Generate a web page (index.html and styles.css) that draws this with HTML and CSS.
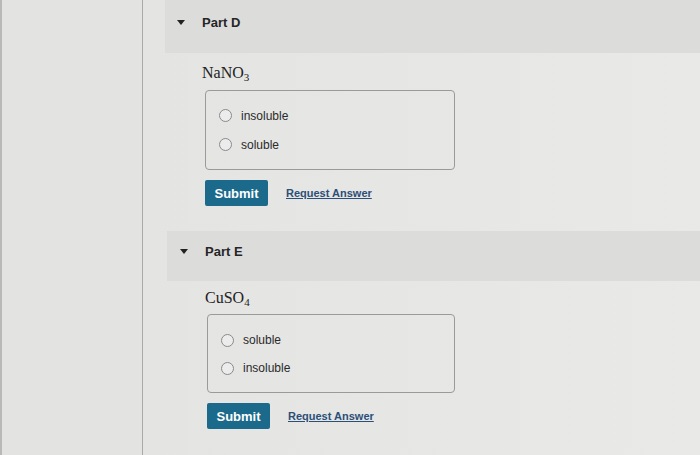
FILE: index.html
```html
<!DOCTYPE html>
<html>
<head>
<meta charset="utf-8">
<link rel="stylesheet" href="styles.css">
</head>
<body>
<div class="page">
  <aside class="sidebar"></aside>
  <main class="main">
    <section class="part part-d">
      <div class="part-head"><span class="caret"></span><span class="part-title">Part D</span></div>
      <div class="part-body">
        <div class="formula">NaNO<sub>3</sub></div>
        <div class="choices">
          <label class="choice"><span class="radio"></span><span>insoluble</span></label>
          <label class="choice"><span class="radio"></span><span>soluble</span></label>
        </div>
        <div class="actions">
          <button class="submit">Submit</button>
          <a class="request" href="#">Request Answer</a>
        </div>
      </div>
    </section>
    <section class="part part-e">
      <div class="part-head"><span class="caret"></span><span class="part-title">Part E</span></div>
      <div class="part-body">
        <div class="formula">CuSO<sub>4</sub></div>
        <div class="choices">
          <label class="choice"><span class="radio"></span><span>soluble</span></label>
          <label class="choice"><span class="radio"></span><span>insoluble</span></label>
        </div>
        <div class="actions">
          <button class="submit">Submit</button>
          <a class="request" href="#">Request Answer</a>
        </div>
      </div>
    </section>
  </main>
</div>
</body>
</html>
```
FILE: styles.css
```css
html, body {
  margin: 0;
  padding: 0;
  height: 100%;
}
body {
  background: #e5e5e4;
  font-family: "Liberation Sans", Arial, sans-serif;
  color: #222;
}
.page {
  display: flex;
  height: 455px;
  overflow: hidden;
}
.sidebar {
  flex: none;
  background: #e3e3e2;
  border-left: 2px solid #b9b9b9;
  border-right: 1px solid #a9a9a9;
  box-sizing: border-box;
  width: 143px;
}
.main {
  flex: 1;
  background: linear-gradient(90deg, #e4e4e3 0%, #e7e7e6 60%, #e9e9e8 100%);
}
.part-head {
  margin-left: 22px;
  display: flex;
  align-items: center;
  background: #dcdcdb;
  padding-left: 12px;
  box-sizing: border-box;
}
.part-d .part-head {
  height: 53px;
  padding-bottom: 8px;
}
.part-e .part-head {
  height: 50px;
  padding-bottom: 10px;
  margin-left: 24px;
  padding-left: 13px;
}
.caret {
  width: 0;
  height: 0;
  border-left: 4.5px solid transparent;
  border-right: 4.5px solid transparent;
  border-top: 5px solid #222;
  margin-right: 17px;
}
.part-title {
  font-weight: bold;
  font-size: 13px;
  color: #262626;
}
.part-body {
  padding-left: 62px;
}
.part-e .part-body {
  padding-left: 64px;
}
.formula {
  font-family: "Liberation Serif", "Times New Roman", serif;
  font-size: 16px;
  line-height: 20px;
  color: #222;
  margin-top: 10px;
  margin-left: -3px;
}
.part-e .formula {
  margin-top: 7px;
  margin-left: -2px;
}
.formula sub {
  font-size: 11px;
  line-height: 0;
  vertical-align: -3px;
}
.choices {
  margin-top: 7px;
  width: 250px;
  height: 80px;
  box-sizing: border-box;
  border: 1px solid #9a9a9a;
  border-radius: 4px;
  padding: 10px 0 10px 13px;
  display: flex;
  flex-direction: column;
}
.part-e .choices {
  margin-top: 6px;
  width: 248px;
  height: 79px;
  padding-top: 11px;
}
.choice {
  height: 29px;
  display: flex;
  align-items: center;
  font-size: 12px;
  color: #2a2a2a;
}
.part-e .choice {
  height: 28px;
}
.radio {
  width: 11px;
  height: 11px;
  border: 1px solid #8a8a8a;
  border-radius: 50%;
  margin-right: 9px;
  background: #ececec;
}
.actions {
  display: flex;
  align-items: center;
  margin-top: 10px;
  margin-bottom: 25px;
}
.submit {
  height: 26px;
  width: 63px;
  border: none;
  border-radius: 2px;
  background: #1b6a8b;
  color: #ffffff;
  font-family: "Liberation Sans", Arial, sans-serif;
  font-size: 13px;
  font-weight: bold;
  padding: 0;
  margin-right: 18px;
}
.request {
  font-size: 11px;
  font-weight: bold;
  color: #2c4f77;
  text-decoration: underline;
}
```
